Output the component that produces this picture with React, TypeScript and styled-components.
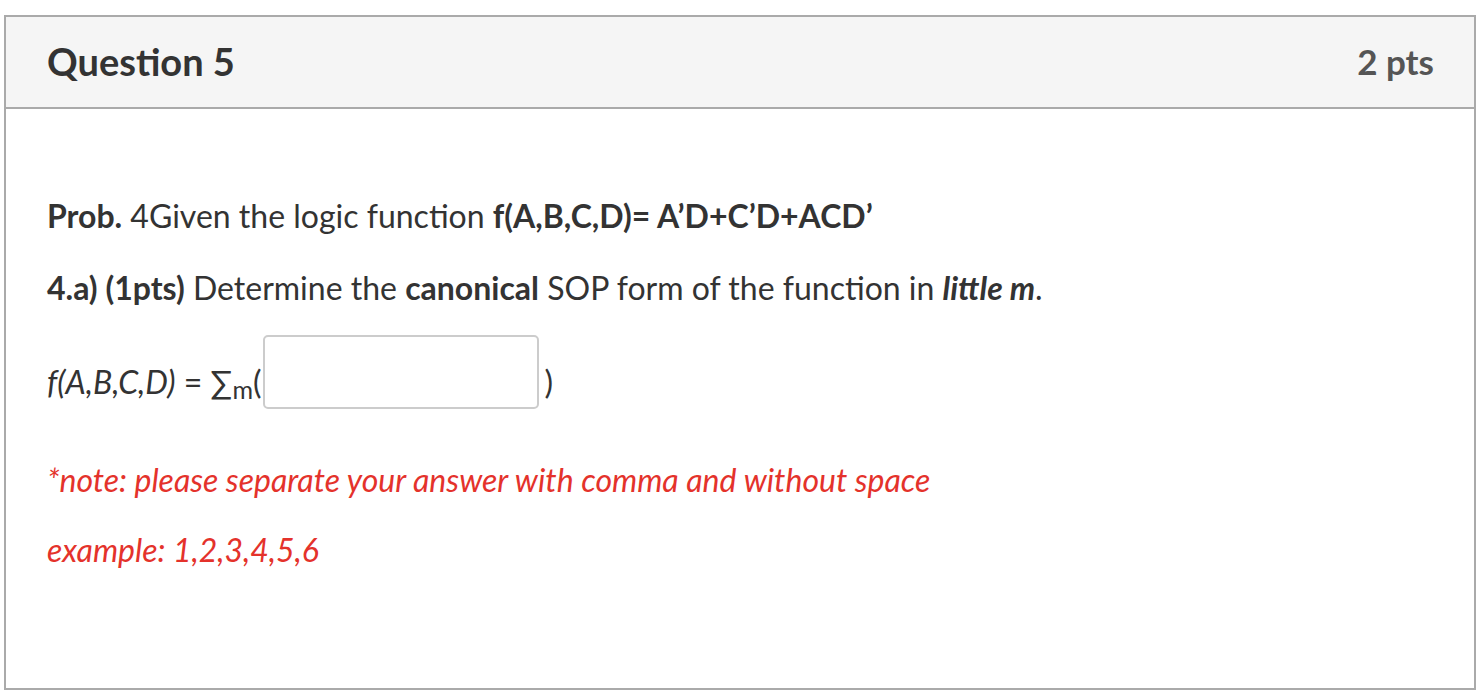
import styled, { createGlobalStyle } from "styled-components";

const GlobalStyle = createGlobalStyle`
  html, body {
    margin: 0;
    padding: 0;
    background: #fff;
  }
  body {
    font-family: Lato, "Open Sans", "Liberation Sans", sans-serif;
    color: #333;
  }
`;

const Page = styled.div`
  padding: 15px 8px 11px 4px;
`;

const QuestionCard = styled.div`
  border: 2px solid #aaa;
  height: 675px;
  box-sizing: border-box;
`;

const Header = styled.div`
  display: flex;
  justify-content: space-between;
  align-items: center;
  height: 90px;
  padding: 0 40px 0 41px;
  background: #f5f5f5;
  border-bottom: 2px solid #aaa;
`;

const Title = styled.h2`
  margin: 0 0 2px;
  font-size: 38px;
  font-weight: 700;
  color: #333;
`;

const Points = styled.div`
  margin-bottom: 2px;
  font-size: 35px;
  font-weight: 700;
  color: #555;
`;

const Body = styled.div`
  padding: 86px 41px 0;
`;

const Para = styled.p<{ $red?: boolean; $gap?: number }>`
  margin: 0 0 ${(p) => p.$gap ?? 30}px;
  font-size: 32px;
  line-height: 42px;
  color: ${(p) => (p.$red ? "#e4322b" : "#333")};
`;

const AnswerRow = styled.div`
  display: flex;
  align-items: center;
  margin: -4px 0 50px;
  font-size: 32px;
  line-height: 42px;
  color: #333;
`;

const RowText = styled.span`
  padding-top: 19px;
  white-space: pre;
`;

const Sub = styled.sub`
  font-size: 25px;
  vertical-align: -5px;
  line-height: 0;
`;

const AnswerInput = styled.input`
  width: 276px;
  height: 74px;
  box-sizing: border-box;
  margin: 0 6px 0 1px;
  border: 2px solid #ccc;
  border-radius: 5px;
  background: #fff;
  font-size: 28px;
  font-family: inherit;
  outline: none;
`;

export default function App() {
  return (
    <Page>
      <GlobalStyle />
      <QuestionCard>
        <Header>
          <Title>Question 5</Title>
          <Points>2 pts</Points>
        </Header>
        <Body>
          <Para>
            <b>Prob.</b> 4Given the logic function <b>f(A,B,C,D)= A’D+C’D+ACD’</b>
          </Para>
          <Para>
            <b>4.a) (1pts)</b> Determine the <b>canonical</b> SOP form of the function in{" "}
            <b>
              <i>little m</i>
            </b>
            .
          </Para>
          <AnswerRow>
            <RowText>
              <i>f(A,B,C,D)</i> = ∑<Sub>m</Sub>(
            </RowText>
            <AnswerInput type="text" aria-label="answer" />
            <RowText>)</RowText>
          </AnswerRow>
          <Para $red $gap={28}>
            <i>*note: please separate your answer with comma and without space</i>
          </Para>
          <Para $red>
            <i>example: 1,2,3,4,5,6</i>
          </Para>
        </Body>
      </QuestionCard>
    </Page>
  );
}
